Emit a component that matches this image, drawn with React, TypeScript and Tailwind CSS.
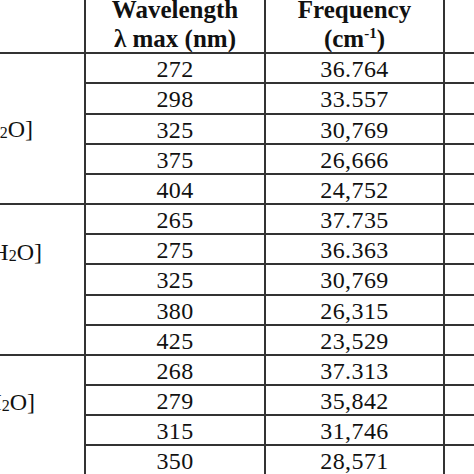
import React from "react";

const groups = [
  {
    label: "[Co(L)Cl.H₂O]",
    pr: "pr-[51px]",
    lines: 1,
    rows: [
      ["272", "36.764"],
      ["298", "33.557"],
      ["325", "30,769"],
      ["375", "26,666"],
      ["404", "24,752"],
    ],
  },
  {
    label: "[Ni(L)Cl.H₂O]",
    pr: "pr-[42px]",
    lines: 3,
    rows: [
      ["265", "37.735"],
      ["275", "36.363"],
      ["325", "30,769"],
      ["380", "26,315"],
      ["425", "23,529"],
    ],
  },
  {
    label: "[Cu(L)Cl.H₂O]",
    pr: "pr-[49px]",
    lines: 3,
    rows: [
      ["268", "37.313"],
      ["279", "35,842"],
      ["315", "31,746"],
      ["350", "28,571"],
      ["352", "28,409"],
    ],
  },
];

function Label({ text }: { text: string }) {
  const parts = text.split("₂");
  return (
    <span className="whitespace-nowrap">
      {parts[0]}
      <span className="relative top-[1px] text-[16px] leading-none">2</span>
      {parts[1]}
    </span>
  );
}

export default function App() {
  return (
    <div className="h-[474px] w-[474px] overflow-hidden bg-white [font-family:'Liberation_Serif','Times_New_Roman',serif] text-[#111]">
      <div className="grid grid-cols-[84px_178px_177px_29px] grid-rows-[52px_28px_29px_28px_28px_28px_28px_28px_29px_28px_28px_28px_28px_28px_28px_28px] gap-[2px] bg-[#333]">
        <div className="bg-white" />
        <div className="flex flex-col justify-end overflow-hidden bg-white text-center text-[25px] font-bold leading-[29px]">
          <div className="translate-y-[1px]">
            <div>Wavelength</div>
            <div>λ max (nm)</div>
          </div>
        </div>
        <div className="flex flex-col justify-end overflow-hidden bg-white text-center text-[25px] font-bold leading-[29px]">
          <div className="translate-y-[1px]">
            <div>Frequency</div>
            <div>
              (cm<span className="relative top-[-9px] text-[15px] leading-none">-1</span>)
            </div>
          </div>
        </div>
        <div className="bg-white" />
        {groups.map((g, gi) => (
          <React.Fragment key={gi}>
            {g.rows.map((r, ri) => (
              <React.Fragment key={ri}>
                {ri === 0 && (
                  <div
                    className={`row-span-5 flex flex-col items-end justify-center overflow-hidden bg-white text-[24px] leading-[28px] ${g.pr}`}
                  >
                    <div>
                      <Label text={g.label} />
                    </div>
                    {g.lines === 3 && (
                      <>
                        <div>&nbsp;</div>
                        <div>&nbsp;</div>
                      </>
                    )}
                  </div>
                )}
                <div className="bg-white pt-[1px] text-center text-[24px] leading-[28px] tracking-[0.4px]">{r[0]}</div>
                <div className="bg-white pt-[1px] text-center text-[24px] leading-[28px] tracking-[0.4px]">{r[1]}</div>
                <div className="bg-white" />
              </React.Fragment>
            ))}
          </React.Fragment>
        ))}
      </div>
    </div>
  );
}
